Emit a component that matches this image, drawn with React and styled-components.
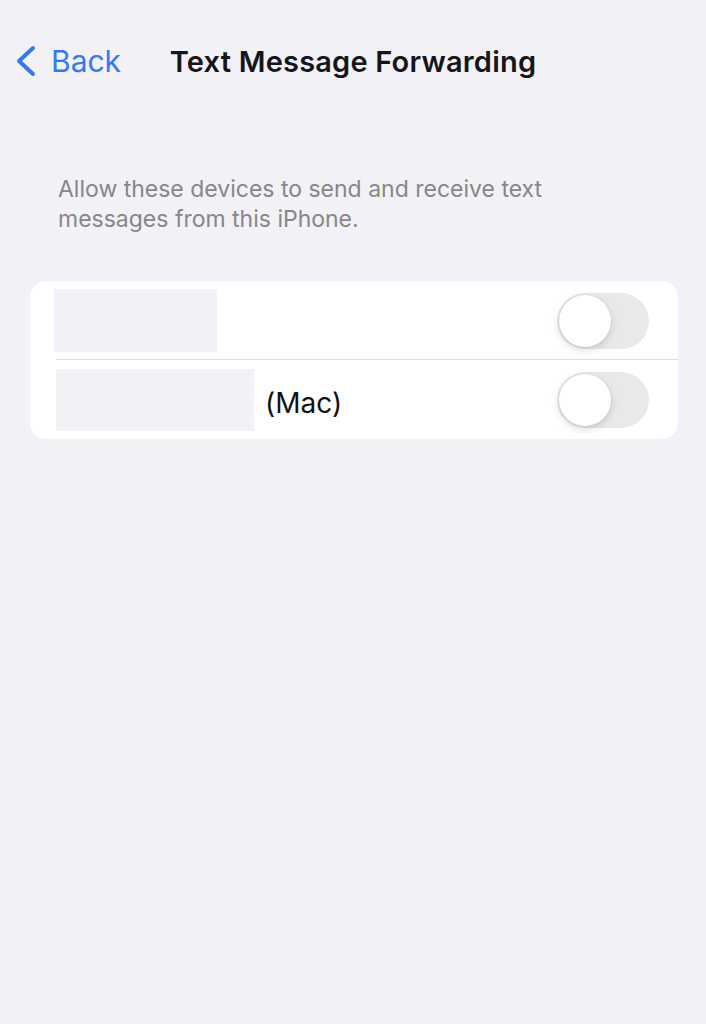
import React, { useState } from 'react'
import styled, { createGlobalStyle } from 'styled-components'

const GlobalStyle = createGlobalStyle`
  html, body {
    margin: 0;
    padding: 0;
    background: #f2f1f6;
  }
  body {
    font-family: Inter, "Noto Sans", "Liberation Sans", sans-serif;
    -webkit-font-smoothing: antialiased;
  }
`

const devices = [
  { id: 'phone', label: '', blankWidth: 163, blankHeight: 63, inset: 24 },
  { id: 'mac', label: '(Mac)', blankWidth: 198, blankHeight: 62, inset: 26 },
]

const Chevron = () => (
  <svg width="24" height="34" viewBox="0 0 24 34" fill="none">
    <path d="M19 4 L5 17 L19 30" stroke="#3478f6" strokeWidth="4" strokeLinecap="round" strokeLinejoin="round" />
  </svg>
)

const App = () => {
  const [on, setOn] = useState({ phone: false, mac: false })

  return (
    <Screen>
      <GlobalStyle />
      <NavBar>
        <BackButton>
          <Chevron />
          <span>Back</span>
        </BackButton>
        <Title>Text Message Forwarding</Title>
        <div />
      </NavBar>

      <Hint>
        Allow these devices to send and receive text
        <br />
        messages from this iPhone.
      </Hint>

      <Card>
        {devices.map((d, i) => (
          <Row key={d.id} $inset={d.inset} $last={i === devices.length - 1}>
            <Blank $w={d.blankWidth} $h={d.blankHeight} />
            {d.label && <Label>{d.label}</Label>}
            <Toggle
              $on={on[d.id]}
              onClick={() => setOn({ ...on, [d.id]: !on[d.id] })}
            >
              <Knob $on={on[d.id]} />
            </Toggle>
          </Row>
        ))}
      </Card>
    </Screen>
  )
}

const Screen = styled.div`
  width: 706px;
  min-height: 1024px;
  background: #f2f1f6;
  box-sizing: border-box;
`

const NavBar = styled.header`
  height: 122px;
  display: grid;
  grid-template-columns: 1fr auto 1fr;
  align-items: center;
`

const BackButton = styled.button`
  justify-self: start;
  margin-left: 14px;
  display: flex;
  align-items: center;
  gap: 13px;
  border: 0;
  padding: 0;
  background: none;
  color: #3478f6;
  font-family: inherit;
  font-size: 30px;
  font-weight: 400;
  cursor: pointer;
`

const Title = styled.h1`
  margin: 0;
  font-size: 29px;
  font-weight: 600;
  color: #16161a;
  letter-spacing: 0.2px;
`

const Hint = styled.p`
  margin: 52px 0 47px 58px;
  font-size: 23px;
  line-height: 30px;
  color: #86868b;
`

const Card = styled.section`
  margin: 0 28px 0 30px;
  background: #ffffff;
  border-radius: 16px;
  overflow: hidden;
`

const Row = styled.div`
  height: 79px;
  display: flex;
  align-items: center;
  padding: 0 29px 0 ${({ $inset }) => $inset}px;
  position: relative;

  &::after {
    content: "";
    display: ${({ $last }) => ($last ? 'none' : 'block')};
    position: absolute;
    left: 26px;
    right: 0;
    bottom: 0;
    height: 1px;
    background: #dcdce1;
  }
`

const Blank = styled.div`
  width: ${({ $w }) => $w}px;
  height: ${({ $h }) => $h}px;
  background: #f2f1f6;
`

const Label = styled.span`
  margin-left: 11px;
  margin-top: 6px;
  font-size: 28px;
  color: #111114;
`

const Toggle = styled.button`
  margin-left: auto;
  width: 92px;
  height: 56px;
  border: 0;
  padding: 2px;
  border-radius: 28px;
  background: ${({ $on }) => ($on ? '#34c759' : '#e9e9ec')};
  display: flex;
  cursor: pointer;
`

const Knob = styled.span`
  width: 52px;
  height: 52px;
  border-radius: 50%;
  background: #fff;
  box-shadow: 0 3px 8px rgba(0, 0, 0, 0.15), 0 0 0 0.5px rgba(0, 0, 0, 0.06);
  margin-left: ${({ $on }) => ($on ? 'auto' : '0')};
`

export default App
